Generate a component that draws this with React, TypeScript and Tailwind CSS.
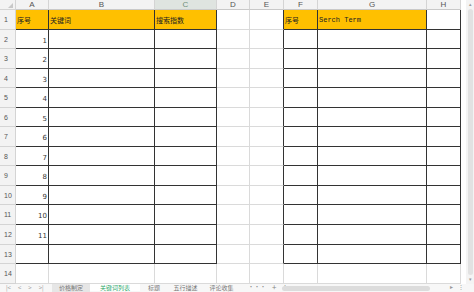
import React from "react";

const COLS = ["A", "B", "C", "D", "E", "F", "G", "H"];
const ROW_H = [20, 19, 20, 19, 20, 19, 20, 19, 20, 19, 20, 20, 19, 20];

// table 1: A-C (0..2), table 2: F-H (5..7), rows 1..13
const inTable = (r: number, c: number) =>
  r >= 1 && r <= 13 && ((c >= 0 && c <= 2) || (c >= 5 && c <= 7));

const header = (r: number, c: number) => {
  if (r !== 1) return "";
  return ["序号", "关键词", "搜索指数", "", "", "序号", "Serch Term", ""][c];
};

const Cell = ({ r, c }: { r: number; c: number }) => {
  const yellow = r === 1 && (c <= 2 || c === 5 || c === 6);
  const rightDark = inTable(r, c) || inTable(r, c + 1);
  const bottomDark = inTable(r, c) || inTable(r + 1, c);
  const label = header(r, c);
  const num = c === 0 && r >= 2 && r <= 12 ? r - 1 : null;
  return (
    <div
      className={`border-r border-b ${rightDark ? "border-r-[#333]" : "border-r-[#dadada]"} ${
        bottomDark ? "border-b-[#333]" : "border-b-[#dadada]"
      } ${yellow ? "bg-[#ffc000]" : "bg-white"} flex items-center text-[7px] text-[#222] leading-none`}
      style={{ height: ROW_H[r - 1] }}
    >
      {label && (
        <span
          className={`pl-[1px] pt-[1px] ${c === 6 ? "font-['Liberation_Mono',monospace]" : "font-['Noto_Sans_CJK_SC',sans-serif]"}`}
        >
          {label}
        </span>
      )}
      {num !== null && (
        <span className="ml-auto pr-[1px] pt-[4px] font-['DejaVu_Sans',sans-serif] text-[7px] text-[#333]">{num}</span>
      )}
    </div>
  );
};

export default function App() {
  const rows = Array.from({ length: 14 }, (_, i) => i + 1);
  return (
    <div className="w-[474px] h-[292px] overflow-hidden bg-white font-['Liberation_Sans',sans-serif] relative">
      <div className="flex">
        <div className="grid grid-cols-[16px_33px_106px_62px_33px_34px_34px_109px_34px] w-[461px]">
          {/* column headers */}
          <div className="h-[10px] bg-[#f3f3f3] border-r border-b border-[#d4d4d4] relative">
            <div className="absolute right-[2px] bottom-[1px] w-0 h-0 border-l-[5px] border-l-transparent border-b-[5px] border-b-[#c8c8c8]" />
          </div>
          {COLS.map((l) => (
            <div
              key={l}
              className={`h-[10px] border-r border-b ${
                l === "C" ? "bg-[#dfe4e0] text-[#6f8f78] border-b-[#9db8a6]" : "bg-[#f3f3f3] text-[#555]"
              } border-r-[#d4d4d4] border-b-[#c9c9c9] flex items-center justify-center text-[8px] leading-none`}
            >
              {l}
            </div>
          ))}
          {rows.map((r) => (
            <React.Fragment key={r}>
              <div
                className="bg-[#f3f3f3] border-r border-b border-[#d4d4d4] flex items-center pl-[4px] text-[7px] text-[#555] leading-none"
                style={{ height: ROW_H[r - 1] }}
              >
                {r}
              </div>
              {COLS.map((_, c) => (
                <Cell key={c} r={r} c={c} />
              ))}
            </React.Fragment>
          ))}
        </div>
        {/* vertical scrollbar */}
        <div className="flex-1 flex justify-end">
          <div className="w-[8px] h-[284px] bg-[#f4f4f4] flex flex-col items-center">
            <div className="text-[5px] text-[#999] leading-none mt-[2px]">▴</div>
            <div className="w-[5px] h-[266px] bg-[#e2e2e2] rounded-sm mt-[2px]" />
            <div className="text-[5px] text-[#999] leading-none mt-auto mb-[2px]">▾</div>
          </div>
        </div>
      </div>
      {/* sheet tabs */}
      <div className="h-[8px] flex items-start bg-[#f7f7f7] text-[6px] leading-none font-['Noto_Sans_CJK_SC',sans-serif] text-[#777]">
        <div className="flex gap-[7px] pl-[6px] pt-[1px] text-[#999] w-[52px]">
          <span>|&lt;</span>
          <span>&lt;</span>
          <span>&gt;</span>
          <span>&gt;|</span>
        </div>
        <div className="w-[38px] h-full bg-[#e6e6e6] flex justify-center pt-[1px]">价格制定</div>
        <div className="w-[50px] flex justify-center pt-[1px] text-[#2ea86a] bg-white">关键词列表</div>
        <div className="w-[28px] flex justify-center pt-[1px]">标题</div>
        <div className="w-[35px] flex justify-center pt-[1px]">五行描述</div>
        <div className="w-[37px] flex justify-center pt-[1px]">评论收集</div>
        <div className="w-[42px] flex gap-[6px] pl-[8px] text-[#888]">
          <span>···</span>
          <span className="text-[8px] -mt-[1px]">+</span>
          <span>⋮</span>
        </div>
        <div className="w-[148px] h-[5px] mt-[2px] bg-[#dcdcdc] rounded-sm" />
        <div className="flex-1 flex justify-end gap-[5px] pr-[10px] text-[#999]">
          <span>▸</span>
          <span>⋮</span>
        </div>
      </div>
    </div>
  );
}
